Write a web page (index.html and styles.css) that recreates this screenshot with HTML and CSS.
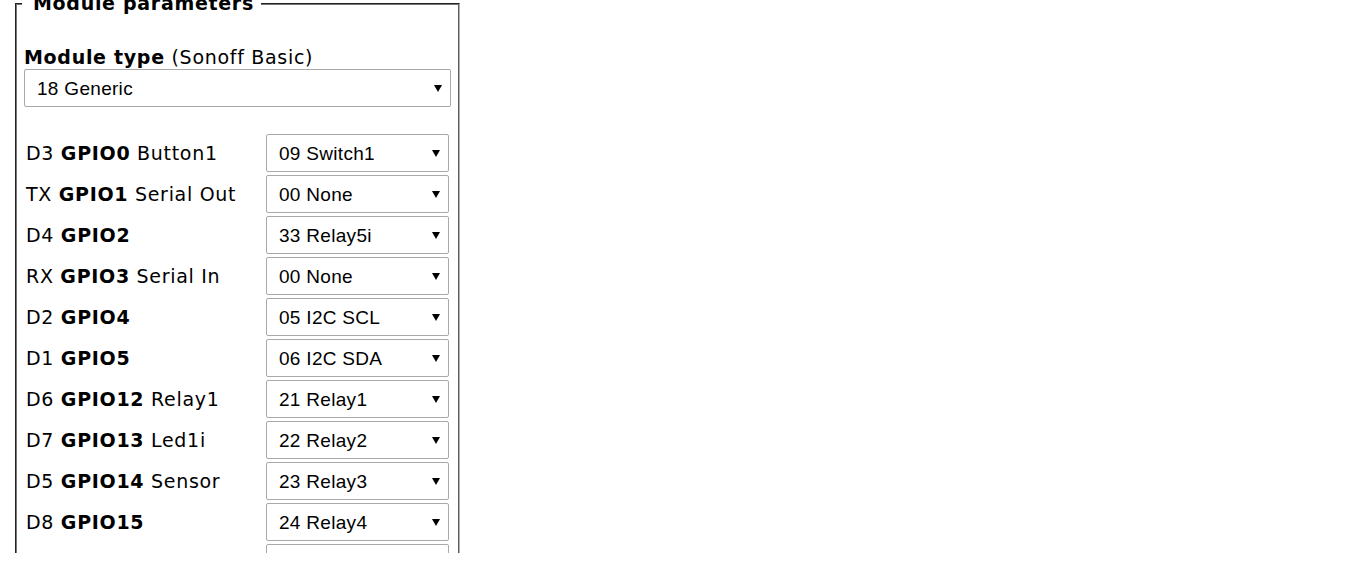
FILE: index.html
```html
<!DOCTYPE html>
<html>
<head>
<meta charset="utf-8">
<link rel="stylesheet" href="styles.css">
</head>
<body>
<div class="viewport">
  <div class="page">
    <fieldset class="module">
      <legend class="module-legend">Module parameters</legend>
      <p class="type-label"><b>Module type</b> (Sonoff Basic)</p>
      <div class="sel sel-wide"><select><option>18 Generic</option></select></div>
      <div class="gpio-list">
        <div class="gpio-row"><span class="gpio-label">D3 <b>GPIO0</b> Button1</span><div class="sel"><select><option>09 Switch1</option></select></div></div>
        <div class="gpio-row"><span class="gpio-label">TX <b>GPIO1</b> Serial Out</span><div class="sel"><select><option>00 None</option></select></div></div>
        <div class="gpio-row"><span class="gpio-label">D4 <b>GPIO2</b></span><div class="sel"><select><option>33 Relay5i</option></select></div></div>
        <div class="gpio-row"><span class="gpio-label">RX <b>GPIO3</b> Serial In</span><div class="sel"><select><option>00 None</option></select></div></div>
        <div class="gpio-row"><span class="gpio-label">D2 <b>GPIO4</b></span><div class="sel"><select><option>05 I2C SCL</option></select></div></div>
        <div class="gpio-row"><span class="gpio-label">D1 <b>GPIO5</b></span><div class="sel"><select><option>06 I2C SDA</option></select></div></div>
        <div class="gpio-row"><span class="gpio-label">D6 <b>GPIO12</b> Relay1</span><div class="sel"><select><option>21 Relay1</option></select></div></div>
        <div class="gpio-row"><span class="gpio-label">D7 <b>GPIO13</b> Led1i</span><div class="sel"><select><option>22 Relay2</option></select></div></div>
        <div class="gpio-row"><span class="gpio-label">D5 <b>GPIO14</b> Sensor</span><div class="sel"><select><option>23 Relay3</option></select></div></div>
        <div class="gpio-row"><span class="gpio-label">D8 <b>GPIO15</b></span><div class="sel"><select><option>24 Relay4</option></select></div></div>
        <div class="gpio-row"><span class="gpio-label"></span><div class="sel"><select><option></option></select></div></div>
      </div>
    </fieldset>
  </div>
</div>
</body>
</html>
```

FILE: styles.css
```css
html, body {
  margin: 0;
  padding: 0;
  background: #fff;
}
.viewport {
  height: 553px;
  overflow: hidden;
}
.page {
  margin-top: -7px;
  padding-left: 15px;
  font-family: "DejaVu Sans", Verdana, sans-serif;
  font-size: 19px;
  letter-spacing: 0.7px;
  color: #000;
}
.module {
  width: 445px;
  box-sizing: border-box;
  margin: 0;
  padding: 0 7px 20px 7px;
  border: 2px groove #b0b0b0;
  border-left-color: #777;
  border-top-color: #777;
}
.module-legend {
  font-weight: bold;
  padding: 0 7px 0 11px;
  margin-left: -2px;
  line-height: 21px;
}
.type-label {
  margin: 33px 0 0 0;
  line-height: 21px;
}
.sel {
  position: relative;
  height: 38px;
}
.sel select {
  -webkit-appearance: none;
  appearance: none;
  width: 100%;
  height: 38px;
  box-sizing: border-box;
  margin: 0;
  padding: 0 24px 0 12px;
  border: 1px solid #a9a9a9;
  border-radius: 2px;
  background: #fff;
  font-family: "Liberation Sans", Arial, sans-serif;
  font-size: 19px;
  letter-spacing: 0.3px;
  color: #000;
}
.sel::after {
  content: "";
  position: absolute;
  right: 9px;
  top: 16px;
  width: 0;
  height: 0;
  border-left: 4px solid transparent;
  border-right: 4px solid transparent;
  border-top: 7px solid #000;
  pointer-events: none;
}
.sel-wide {
  margin-top: 1px;
}
.gpio-list {
  margin-top: 27px;
  display: flex;
  flex-direction: column;
  gap: 3px;
}
.gpio-row {
  display: grid;
  grid-template-columns: 242px 183px;
  align-items: center;
}
.gpio-label {
  padding-left: 2px;
  white-space: nowrap;
}
```
